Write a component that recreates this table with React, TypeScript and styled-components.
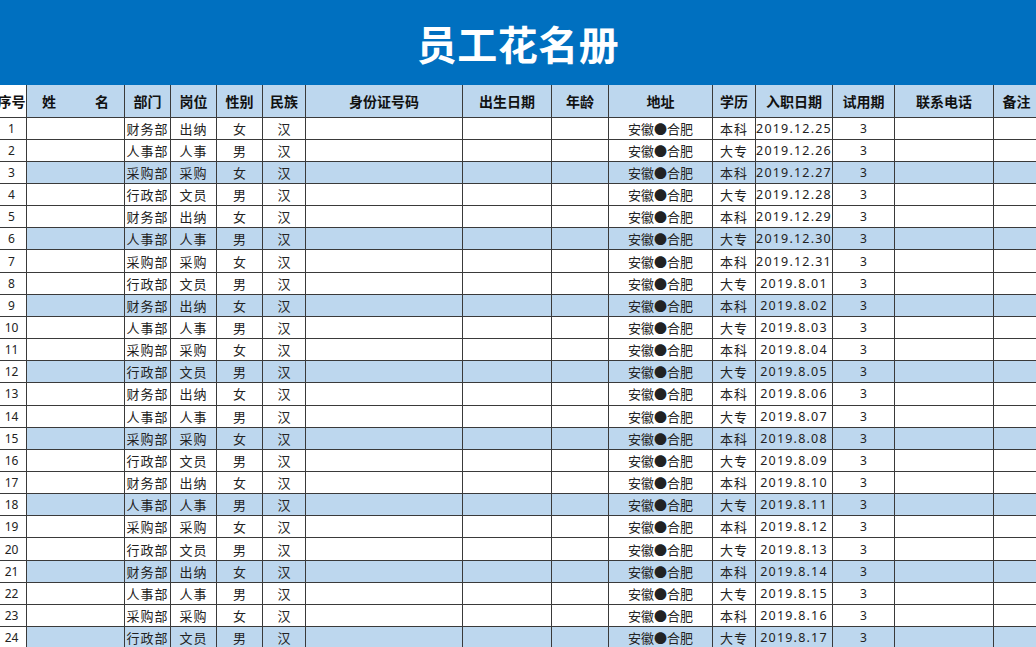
import React from "react";
import styled, { createGlobalStyle } from "styled-components";

const GlobalStyle = createGlobalStyle`
  html, body {
    margin: 0;
    padding: 0;
    background: #ffffff;
    overflow: hidden;
  }
  body {
    font-family: "Noto Sans CJK SC", "Noto Sans", sans-serif;
  }
`;

const Page = styled.div`
  width: 1036px;
  height: 647px;
  overflow: hidden;
  background: #ffffff;
`;

const TitleBar = styled.header`
  height: 85px;
  background: #0070c0;
  display: flex;
  align-items: center;
  justify-content: center;
`;

const Title = styled.h1`
  margin: 0;
  color: #ffffff;
  font-family: "Noto Sans CJK SC", sans-serif;
  font-weight: 700;
  font-size: 40px;
  line-height: 1;
  letter-spacing: 0.5px;
`;

const columns = [30, 98, 46, 46, 46, 43, 157, 89, 57, 104, 43, 77, 62, 99, 46];
const tableWidth = columns.reduce((a, b) => a + b, 0);

const Table = styled.table`
  table-layout: fixed;
  border-collapse: collapse;
  margin-left: -4px;
`;

const HeadCell = styled.th<{ $plain?: boolean }>`
  box-sizing: border-box;
  height: 32px;
  padding: 0;
  border: 1px solid #3a3a3a;
  border-top: none;
  background: ${(p) => (p.$plain ? "#ffffff" : "#bdd7ee")};
  color: #111;
  font-family: "Noto Sans CJK SC", sans-serif;
  font-weight: 700;
  font-size: 14px;
  line-height: 1;
  text-align: center;
  white-space: nowrap;
  overflow: hidden;
`;

const Spread = styled.span`
  display: flex;
  justify-content: space-between;
  padding: 0 15px 0 15px;
`;

const Row = styled.tr<{ $band: boolean }>`
  background: ${(p) => (p.$band ? "#bdd7ee" : "#ffffff")};
`;

const Cell = styled.td<{ $plain?: boolean; $wide?: boolean }>`
  box-sizing: border-box;
  padding: 0;
  height: 22.17px;
  border: 1px solid #3a3a3a;
  ${(p) => (p.$plain ? "background: #ffffff;" : "")}
  color: #222;
  font-family: "Noto Sans CJK SC", sans-serif;
  font-size: 13px;
  line-height: 13px;
  text-align: center;
  white-space: nowrap;
  overflow: hidden;
  letter-spacing: ${(p) => (p.$wide ? "1px" : "0")};
`;

const NumCell = styled(Cell)`
  font-family: "Noto Sans", "Liberation Sans", sans-serif;
  font-size: 12px;
`;

const DateCell = styled(Cell)`
  font-family: "Noto Sans", "Liberation Sans", sans-serif;
  font-size: 12.5px;
  letter-spacing: 1.2px;
`;

const depts = ["财务部", "人事部", "采购部", "行政部"];
const posts = ["出纳", "人事", "采购", "文员"];

type Staff = {
  no: number;
  dept: string;
  post: string;
  gender: string;
  edu: string;
  date: string;
};

const staff: Staff[] = Array.from({ length: 24 }, (_, i) => {
  const no = i + 1;
  const date =
    no <= 7
      ? `2019.12.${24 + no}`
      : `2019.8.${String(no - 7).padStart(2, "0")}`;
  return {
    no,
    dept: depts[i % 4],
    post: posts[i % 4],
    gender: no % 2 === 1 ? "女" : "男",
    edu: no % 2 === 1 ? "本科" : "大专",
    date,
  };
});

export default function App() {
  return (
    <Page>
      <GlobalStyle />
      <TitleBar>
        <Title>员工花名册</Title>
      </TitleBar>
      <Table style={{ width: tableWidth }}>
        <colgroup>
          {columns.map((w, i) => (
            <col key={i} style={{ width: w }} />
          ))}
        </colgroup>
        <thead>
          <tr>
            <HeadCell $plain>序号</HeadCell>
            <HeadCell>
              <Spread>
                <span>姓</span>
                <span>名</span>
              </Spread>
            </HeadCell>
            <HeadCell>部门</HeadCell>
            <HeadCell>岗位</HeadCell>
            <HeadCell>性别</HeadCell>
            <HeadCell>民族</HeadCell>
            <HeadCell>身份证号码</HeadCell>
            <HeadCell>出生日期</HeadCell>
            <HeadCell>年龄</HeadCell>
            <HeadCell>地址</HeadCell>
            <HeadCell>学历</HeadCell>
            <HeadCell>入职日期</HeadCell>
            <HeadCell>试用期</HeadCell>
            <HeadCell>联系电话</HeadCell>
            <HeadCell>备注</HeadCell>
          </tr>
        </thead>
        <tbody>
          {staff.map((s) => (
            <Row key={s.no} $band={s.no % 3 === 0}>
              <NumCell $plain>{s.no}</NumCell>
              <Cell />
              <Cell $wide>{s.dept}</Cell>
              <Cell $wide>{s.post}</Cell>
              <Cell>{s.gender}</Cell>
              <Cell>汉</Cell>
              <Cell />
              <Cell />
              <Cell />
              <Cell>安徽●合肥</Cell>
              <Cell $wide>{s.edu}</Cell>
              <DateCell>{s.date}</DateCell>
              <NumCell>3</NumCell>
              <Cell />
              <Cell />
            </Row>
          ))}
        </tbody>
      </Table>
    </Page>
  );
}
